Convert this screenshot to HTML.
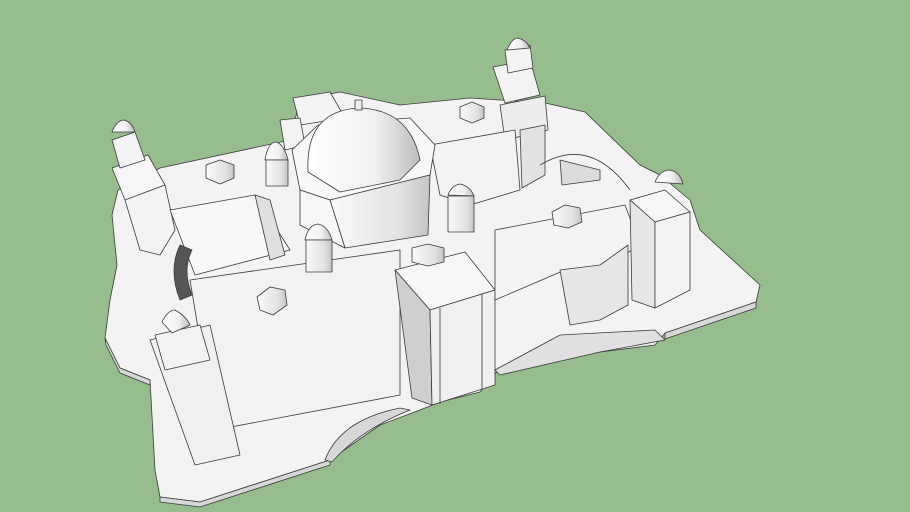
<!DOCTYPE html>
<html><head><style>html,body{margin:0;padding:0;background:#97bd8e;width:910px;height:512px;overflow:hidden}</style></head>
<body>
<svg width="910" height="512" viewBox="0 0 910 512" xmlns="http://www.w3.org/2000/svg">
<defs>
<linearGradient id="dome" x1="0" y1="0" x2="1" y2="0"><stop offset="0" stop-color="#fff"/><stop offset="0.6" stop-color="#f0f0f0"/><stop offset="1" stop-color="#bdbdbd"/></linearGradient>
<linearGradient id="cyl" x1="0" y1="0" x2="1" y2="0"><stop offset="0" stop-color="#fafafa"/><stop offset="0.7" stop-color="#e2e2e2"/><stop offset="1" stop-color="#c4c4c4"/></linearGradient>
</defs>
<g stroke="#3a3a3a" stroke-width="0.8" stroke-linejoin="round" fill="#f3f3f3">
<!-- base slab -->
<polygon points="118,190 160,168 290,140 300,100 340,92 400,105 470,98 545,103 585,112 640,165 660,175 690,200 700,230 760,285 756,302 665,333 655,345 600,352 500,368 480,392 440,402 420,410 380,425 330,460 200,502 160,497 155,470 150,380 120,368 105,338 110,300 117,265 112,215"/>
<polygon points="105,338 120,368 150,380 150,385 120,373 106,345" fill="#d8d8d8"/>
<polygon points="160,497 200,502 330,460 330,465 200,507 160,502" fill="#d8d8d8"/>
<polygon points="665,333 756,302 756,308 665,339" fill="#d8d8d8"/>
<!-- left tower -->
<polygon points="112,168 148,155 165,185 125,200" fill="#f6f6f6"/>
<polygon points="125,200 165,185 175,230 160,255 140,250"/>
<polygon points="112,140 135,132 145,160 120,168"/>
<!-- left wing -->
<polygon points="170,210 255,195 290,250 195,275" fill="#f8f8f8"/>
<polygon points="255,195 270,200 285,255 270,260" fill="#e0e0e0"/>
<path d="M180,245 Q168,270 180,300 L192,295 Q182,270 192,250 Z" fill="#555"/>
<!-- central building -->
<polygon points="190,280 400,250 400,395 215,430" fill="#f2f2f2"/>
<polygon points="150,340 210,325 240,455 195,465" fill="#f0f0f0"/>
<polygon points="155,335 200,325 210,360 165,370"/>
<!-- front block -->
<polygon points="395,270 465,252 495,290 430,310" fill="#f7f7f7"/>
<polygon points="395,270 430,310 432,405 412,398" fill="#cfcfcf"/>
<polygon points="430,310 495,290 495,385 432,405" fill="#f0f0f0"/>
<line x1="440" y1="308" x2="440" y2="404"/><line x1="482" y1="294" x2="482" y2="389"/>
<!-- right wing -->
<polygon points="495,230 625,205 640,245 600,270 565,270 495,300"/>
<polygon points="560,270 600,265 628,245 628,305 600,320 570,325" fill="#e6e6e6"/>
<polygon points="495,370 560,335 655,330 665,340 600,352 500,375" fill="#e0e0e0"/>
<!-- right tower -->
<polygon points="630,200 665,190 690,212 655,222" fill="#f7f7f7"/>
<polygon points="630,200 655,222 655,308 632,300" fill="#e6e6e6"/>
<polygon points="655,222 690,212 690,290 655,308"/>
<!-- back right tower -->
<polygon points="493,67 530,60 540,95 505,103"/>
<polygon points="505,50 530,45 533,68 508,73"/>
<polygon points="500,105 545,96 548,130 505,140" fill="#ededed"/>
<!-- back right courtyard -->
<polygon points="430,145 515,130 520,190 470,205 440,195"/>
<polygon points="520,130 545,125 545,175 522,188" fill="#e2e2e2"/>
<path d="M540,165 Q590,135 630,190" fill="none"/>
<polygon points="560,160 600,170 600,180 562,185" fill="#dcdcdc"/>
<!-- dome building -->
<polygon points="293,98 330,92 345,118 300,125"/>
<polygon points="280,120 300,118 305,145 285,150"/>
<polygon points="292,150 318,125 410,118 435,145 430,175 330,200 300,190" fill="#f8f8f8"/>
<polygon points="330,200 430,175 428,235 345,248" fill="url(#cyl)"/>
<polygon points="300,190 330,200 345,248 300,225" fill="#f7f7f7"/>
<path d="M308,172 Q305,110 360,108 Q410,110 420,160 L400,180 L340,192 Z" fill="url(#dome)"/>
<rect x="355" y="100" width="7" height="10" fill="#eee"/>
<!-- small domed turrets -->
<path d="M265,160 Q268,142 276,142 Q284,144 288,160 Z" fill="url(#dome)"/>
<rect x="266" y="160" width="22" height="26" fill="url(#cyl)"/>
<path d="M448,195 Q452,185 460,184 Q470,186 474,196 Z" fill="url(#dome)"/>
<rect x="448" y="196" width="26" height="36" fill="url(#cyl)"/>
<path d="M305,240 Q308,225 318,224 Q328,226 332,240 Z" fill="url(#dome)"/>
<rect x="306" y="240" width="26" height="32" fill="url(#cyl)"/>
<path d="M655,182 Q660,170 670,170 Q680,172 683,184 Z" fill="url(#dome)"/>
<path d="M162,322 Q168,310 175,310 Q186,316 190,325 L172,333 Z" fill="url(#dome)"/>
<path d="M112,132 Q117,120 124,120 Q132,122 135,132 Z" fill="url(#dome)"/>
<path d="M507,50 Q512,38 518,38 Q526,40 530,48 Z" fill="url(#dome)"/>
<!-- hex posts -->
<polygon points="206,165 220,160 234,165 234,178 220,184 206,178" fill="url(#cyl)"/>
<polygon points="460,107 472,102 484,107 484,118 472,123 460,118" fill="url(#cyl)"/>
<polygon points="257,297 270,287 285,290 287,305 273,315 260,310" fill="url(#cyl)"/>
<polygon points="552,212 565,205 580,208 582,222 568,228 554,225" fill="url(#cyl)"/>
<polygon points="412,248 428,244 444,248 444,262 428,266 412,262" fill="url(#cyl)"/>
<!-- front ramp -->
<path d="M325,460 Q340,420 400,408 L410,410 Q360,430 332,462 Z" fill="#d8d8d8"/>
</g>
</svg>
</body></html>
